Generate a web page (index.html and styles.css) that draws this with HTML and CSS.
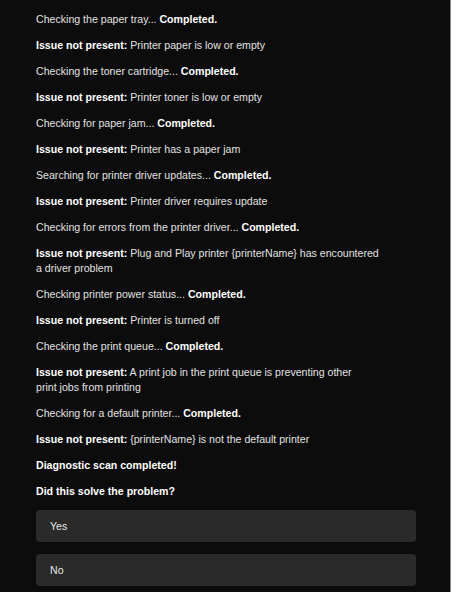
FILE: index.html
```html
<!DOCTYPE html>
<html lang="en">
  <head>
    <meta charset="UTF-8" />
    <meta name="viewport" content="width=device-width, initial-scale=1.0" />
    <title>Printer Troubleshooter</title>
    <link rel="stylesheet" href="styles.css">
  </head>
  <body>
    <div class="panel">
      <div class="log">
        <p>Checking the paper tray... <b>Completed.</b></p>
        <p><b>Issue not present:</b> Printer paper is low or empty</p>
        <p>Checking the toner cartridge... <b>Completed.</b></p>
        <p><b>Issue not present:</b> Printer toner is low or empty</p>
        <p>Checking for paper jam... <b>Completed.</b></p>
        <p><b>Issue not present:</b> Printer has a paper jam</p>
        <p>Searching for printer driver updates... <b>Completed.</b></p>
        <p><b>Issue not present:</b> Printer driver requires update</p>
        <p>Checking for errors from the printer driver... <b>Completed.</b></p>
        <p><b>Issue not present:</b> Plug and Play printer {printerName} has encountered a driver problem</p>
        <p>Checking printer power status... <b>Completed.</b></p>
        <p><b>Issue not present:</b> Printer is turned off</p>
        <p>Checking the print queue... <b>Completed.</b></p>
        <p><b>Issue not present:</b> A print job in the print queue is preventing other print&nbsp;jobs from printing</p>
        <p>Checking for a default printer... <b>Completed.</b></p>
        <p><b>Issue not present:</b> {printerName} is not the default printer</p>
        <p><b>Diagnostic scan completed!</b></p>
        <p><b>Did this solve the problem?</b></p>
      </div>

      <div class="choices">
        <button type="button" class="choice">Yes</button>
        <button type="button" class="choice">No</button>
      </div>
    </div>
  </body>
</html>
```

FILE: styles.css
```css
html,
body {
  margin: 0;
  padding: 0;
  background-color: #ffffff;
}

body {
  font-family: "Liberation Sans", Arial, sans-serif;
  font-size: 10.6px;
  color: #e2e2e2;
}

.panel {
  width: 451px;
  height: 592px;
  box-sizing: border-box;
  background-color: #0c0c0c;
  border-right: 1px solid #8a8a8a;
  padding: 12px 0 0 36px;
  overflow: hidden;
}

.log p {
  margin: 0 0 11px;
  line-height: 15px;
  max-width: 344px;
}

.log b {
  font-weight: 700;
  color: #ffffff;
}

.choices {
  display: flex;
  flex-direction: column;
  gap: 12px;
  width: 380px;
  margin-top: 9px;
}

.choice {
  height: 32px;
  padding: 0 14px;
  text-align: left;
  font-family: inherit;
  font-size: 10.6px;
  color: #e6e6e6;
  background-color: #2a2a2a;
  border: none;
  border-radius: 4px;
}
```
